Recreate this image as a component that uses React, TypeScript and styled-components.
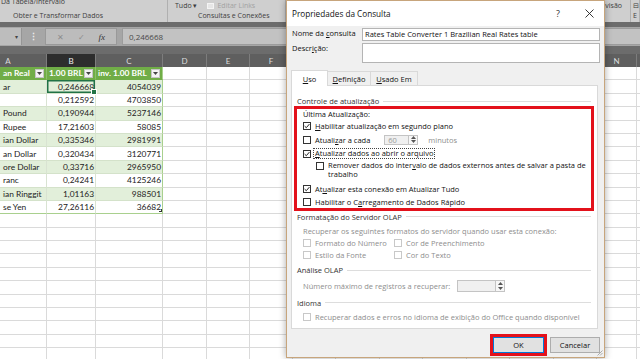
import React from 'react';
import styled, { createGlobalStyle } from 'styled-components';

const GlobalStyle = createGlobalStyle`
  html, body {
    margin: 0;
    padding: 0;
    background: #fff;
  }
  * {
    box-sizing: border-box;
  }
`;

const COLS = '77px 49px 67px 44px 43px 43px repeat(7, 43.43px) 40px 40px';
const LETTERS = 'ABCDEFGHIJKLMN '.split('');

const rows = [
    { name: 'ar', b: '0,246668', c: '4054039' },
    { name: '', b: '0,212592', c: '4703850' },
    { name: 'Pound', b: '0,190944', c: '5237146' },
    { name: 'Rupee', b: '17,21603', c: '58085' },
    { name: 'ian Dollar', b: '0,335346', c: '2981991' },
    { name: 'an Dollar', b: '0,320434', c: '3120771' },
    { name: 'ore Dollar', b: '0,33716', c: '2965950' },
    { name: 'ranc', b: '0,24241', c: '4125246' },
    { name: 'ian Ringgit', b: '1,01163', c: '988501' },
    { name: 'se Yen', b: '27,26116', c: '36682' },
];

const Check = ({ on, off }: { on?: boolean; off?: boolean }) => (
    <Box $disabled={off}>
        {on && (
            <svg width="6" height="6" viewBox="0 0 6 6">
                <path d="M0.6 3.1 L2.3 4.7 L5.4 1.1" fill="none" stroke="#222" strokeWidth="1" />
            </svg>
        )}
    </Box>
);

const Arrows = () => (
    <SpinArrows>
        <svg width="5" height="3" viewBox="0 0 5 3">
            <path d="M0 3 L2.5 0 L5 3 Z" fill="#555" />
        </svg>
        <svg width="5" height="3" viewBox="0 0 5 3">
            <path d="M0 0 L2.5 3 L5 0 Z" fill="#555" />
        </svg>
    </SpinArrows>
);

const FilterBtn = () => (
    <Filter>
        <svg width="5" height="3" viewBox="0 0 5 3">
            <path d="M0 0 L2.5 3 L5 0 Z" fill="#444" />
        </svg>
    </Filter>
);

const App = () => {
    const empty = Array.from({ length: 11 });

    return (
        <Page>
            <GlobalStyle />
            <Excel>
                <Ribbon>
                    <RibbonGroup $w={168} $pad={13}>
                        <RibbonTop>
                            <CutText>Da Tabela/Intervalo</CutText>
                        </RibbonTop>
                        <GroupLabel>Obter e Transformar Dados</GroupLabel>
                    </RibbonGroup>
                    <RibbonGroup $w={118} $pad={7}>
                        <RibbonTop>
                            <span>Tudo ▾</span>
                            <Greyed>
                                <LinkIcon />
                                Editar Links
                            </Greyed>
                        </RibbonTop>
                        <GroupLabel $indent={23}>Consultas e Conexões</GroupLabel>
                    </RibbonGroup>
                    <RibbonGroup $w={345} $pad={0} $right>
                        <RibbonTop>
                            <span>Revisão</span>
                        </RibbonTop>
                        <GroupLabel />
                    </RibbonGroup>
                    <RibbonGroup $w={9} $pad={2}>
                        <RibbonTop>
                            <span>⊟</span>
                        </RibbonTop>
                        <GroupLabel>E</GroupLabel>
                    </RibbonGroup>
                </Ribbon>
                <DarkBand $h={5} />
                <FormulaBar>
                    <NameBox>▾</NameBox>
                    <Dots>⋮</Dots>
                    <FxBox>
                        <span>✕</span>
                        <span>✓</span>
                        <Fx>fx</Fx>
                    </FxBox>
                    <FormulaInput>0,246668</FormulaInput>
                </FormulaBar>
                <DarkBand $h={8} />
                <SheetRow $h={13}>
                    {LETTERS.map((l, i) => (
                        <ColHead key={i} $sel={l === 'B'}>
                            {l.trim()}
                        </ColHead>
                    ))}
                </SheetRow>
                <SheetRow $h={13.4}>
                    <Cell $kind="head" $first>
                        an Real
                        <FilterBtn />
                    </Cell>
                    <Cell $kind="head">
                        1.00 BRL
                        <FilterBtn />
                    </Cell>
                    <Cell $kind="head" $edge>
                        inv. 1.00 BRL
                        <FilterBtn />
                    </Cell>
                    {LETTERS.slice(3).map((_, i) => (
                        <Cell key={i} $kind="blank" />
                    ))}
                </SheetRow>
                {rows.map((r, i) => {
                    const kind = i % 2 === 0 ? 'band' : 'plain';
                    const last = i === rows.length - 1;
                    return (
                        <SheetRow key={i} $h={13.4}>
                            <Cell $kind={kind} $first $last={last}>
                                {r.name}
                            </Cell>
                            <Cell $kind={kind} $right $last={last} $selected={i === 0}>
                                {r.b}
                            </Cell>
                            <Cell $kind={kind} $right $edge $last={last}>
                                {r.c}
                                {last && <ResizeMark />}
                            </Cell>
                            {LETTERS.slice(3).map((_, j) => (
                                <Cell key={j} $kind="blank" />
                            ))}
                        </SheetRow>
                    );
                })}
                {empty.map((_, i) => (
                    <SheetRow key={'e' + i} $h={13.4}>
                        {LETTERS.map((_, j) => (
                            <Cell key={j} $kind="blank" />
                        ))}
                    </SheetRow>
                ))}
            </Excel>

            <Dialog>
                <TitleBar>
                    <Title>Propriedades da Consulta</Title>
                    <Help>?</Help>
                    <Close>
                        <svg width="9" height="9" viewBox="0 0 9 9">
                            <path d="M0.5 0.5 L8.5 8.5 M8.5 0.5 L0.5 8.5" stroke="#222" strokeWidth="0.9" />
                        </svg>
                    </Close>
                </TitleBar>
                <Body>
                    <FieldRow $h={13} $top={2}>
                        <FieldLabel>
                            Nome da <Key>c</Key>onsulta
                        </FieldLabel>
                        <TextBox>Rates Table Converter 1 Brazilian Real Rates table</TextBox>
                    </FieldRow>
                    <FieldRow $h={20} $top={2}>
                        <FieldLabel>
                            Descr<Key>i</Key>ção:
                        </FieldLabel>
                        <TextBox />
                    </FieldRow>
                    <Tabs>
                        <Tab $w={37} $active>
                            <Key>U</Key>so
                        </Tab>
                        <Tab $w={43}>
                            <Key>D</Key>efinição
                        </Tab>
                        <Tab $w={47}>
                            <Key>U</Key>sado Em
                        </Tab>
                    </Tabs>
                    <Panel>
                        <GroupTitle $h={10}>Controle de atualização</GroupTitle>
                        <RedFrame>
                            <Line $h={10}>Última Atualização:</Line>
                            <Line $h={13}>
                                <Check on />
                                <span>
                                    <Key>H</Key>abilitar atualização em segundo plano
                                </span>
                            </Line>
                            <Line $h={15}>
                                <Check />
                                <span>
                                    Atuali<Key>z</Key>ar a cada
                                </span>
                                <Spinner $w={34} $h={10} $ml={10}>
                                    60
                                    <Arrows />
                                </Spinner>
                                <Muted $ml={6}>minutos</Muted>
                            </Line>
                            <Line $h={13}>
                                <Check on />
                                <Focus>
                                    <Key>A</Key>tualizar dados ao abrir o arquivo
                                </Focus>
                            </Line>
                            <Line $h={20} $indent={13} $top>
                                <Check />
                                <Wrapped>
                                    Remover dados do inter<Key>v</Key>alo de dados externos antes de salvar a pasta de
                                    <br />
                                    trabalho
                                </Wrapped>
                            </Line>
                            <Line $h={13} $mt={2}>
                                <Check on />
                                <span>
                                    At<Key>u</Key>alizar esta conexão em Atualizar Tudo
                                </span>
                            </Line>
                            <Line $h={13}>
                                <Check />
                                <span>
                                    Habilitar o C<Key>a</Key>rregamento de Dados Rápido
                                </span>
                            </Line>
                        </RedFrame>
                        <GroupTitle $h={11}>Formatação do Servidor OLAP</GroupTitle>
                        <Line $h={12} $mt={3} $inset>
                            <Muted>Recuperar os seguintes formatos do servidor quando usar esta conexão:</Muted>
                        </Line>
                        <PairRow $h={11}>
                            <Line $h={11}>
                                <Check off />
                                <Muted>Formato do Número</Muted>
                            </Line>
                            <Line $h={11}>
                                <Check off />
                                <Muted>Cor de Preenchimento</Muted>
                            </Line>
                        </PairRow>
                        <PairRow $h={13}>
                            <Line $h={13}>
                                <Check off />
                                <Muted>Estilo da Fonte</Muted>
                            </Line>
                            <Line $h={13}>
                                <Check off />
                                <Muted>Cor do Texto</Muted>
                            </Line>
                        </PairRow>
                        <GroupTitle $h={12} $mt={3}>
                            Análise OLAP
                        </GroupTitle>
                        <Line $h={14} $mt={3} $inset>
                            <Muted>Número máximo de registros a recuperar:</Muted>
                            <Spinner $w={48} $h={12} $ml={3}>
                                <Arrows />
                            </Spinner>
                        </Line>
                        <GroupTitle $h={11} $mt={4}>
                            Idioma
                        </GroupTitle>
                        <Line $h={11} $mt={3} $inset>
                            <Check off />
                            <Muted>Recuperar dados e erros no idioma de exibição do Office quando disponível</Muted>
                        </Line>
                    </Panel>
                    <ButtonRow>
                        <RedButtonFrame>
                            <DlgButton $w={51} $default>
                                OK
                            </DlgButton>
                        </RedButtonFrame>
                        <DlgButton $w={50}>Cancelar</DlgButton>
                    </ButtonRow>
                </Body>
                <Grip>
                    <svg width="6" height="6" viewBox="0 0 6 6">
                        <path d="M5.5 0.5 L0.5 5.5 M5.5 3 L3 5.5" stroke="#999" strokeWidth="0.8" />
                    </svg>
                </Grip>
            </Dialog>
        </Page>
    );
};

const Page = styled.div`
    position: relative;
    width: 640px;
    height: 359px;
    overflow: hidden;
    background: #fff;
`;

const Excel = styled.div`
    display: flex;
    flex-direction: column;
    width: 640px;
`;

const Ribbon = styled.div`
    display: flex;
    height: 22px;
    background: #cfcfcf;
    font-family: 'Open Sans', sans-serif;
    font-size: 7px;
    color: #3c3c3c;
    overflow: hidden;
`;

const RibbonGroup = styled.div<{ $w: number; $pad: number; $right?: boolean }>`
    flex: 0 0 ${(p) => p.$w}px;
    display: flex;
    flex-direction: column;
    justify-content: space-between;
    align-items: ${(p) => (p.$right ? 'flex-end' : 'flex-start')};
    padding: 0 ${(p) => (p.$right ? 8 : 0)}px 2px ${(p) => p.$pad}px;
    border-right: 1px solid #b0b0b0;
    overflow: hidden;
`;

const RibbonTop = styled.div`
    display: flex;
    align-items: center;
    gap: 10px;
    height: 11px;
`;

const CutText = styled.span`
    margin-top: -9px;
    margin-left: -12px;
`;

const Greyed = styled.span`
    display: flex;
    align-items: center;
    gap: 3px;
    color: #a2a2a2;
`;

const LinkIcon = styled.span`
    width: 7px;
    height: 6px;
    border: 1px solid #f4f4f4;
    background: #e6e6e6;
`;

const GroupLabel = styled.div<{ $indent?: number }>`
    height: 9px;
    line-height: 9px;
    padding-left: ${(p) => p.$indent || 0}px;
    color: #404040;
`;

const DarkBand = styled.div<{ $h: number }>`
    height: ${(p) => p.$h}px;
    background: #6c6c6c;
`;

const FormulaBar = styled.div`
    display: flex;
    align-items: center;
    height: 19px;
    background: #a6a6a6;
    font-family: 'Open Sans', sans-serif;
    font-size: 8px;
    color: #555;
`;

const NameBox = styled.div`
    width: 22px;
    height: 17px;
    background: #bdbdbd;
    border-right: 1px solid #959595;
    display: flex;
    align-items: center;
    justify-content: flex-end;
    padding-right: 3px;
    font-size: 6px;
    color: #444;
`;

const Dots = styled.div`
    width: 23px;
    text-align: center;
    color: #eee;
    font-size: 9px;
    font-weight: bold;
`;

const FxBox = styled.div`
    width: 72px;
    height: 17px;
    background: #bcbcbc;
    border: 1px solid #999;
    display: flex;
    align-items: center;
    justify-content: space-around;
    padding: 0 4px;
    color: #8c8c8c;
    font-size: 8px;
`;

const Fx = styled.span`
    font-family: 'Liberation Serif', serif;
    font-style: italic;
    color: #333;
    font-size: 9px;
`;

const FormulaInput = styled.div`
    flex: 1;
    height: 17px;
    margin-left: 5px;
    background: #c2c2c2;
    border: 1px solid #9c9c9c;
    border-right: none;
    padding-left: 6px;
    line-height: 15px;
    font-size: 8px;
    color: #4a4a4a;
`;

const SheetRow = styled.div<{ $h: number }>`
    display: grid;
    grid-template-columns: ${COLS};
    height: ${(p) => p.$h}px;
    margin-left: -30px;
`;

const ColHead = styled.div<{ $sel?: boolean }>`
    display: flex;
    align-items: center;
    justify-content: center;
    background: ${(p) => (p.$sel ? '#2d2d2d' : '#5f5f5f')};
    color: ${(p) => (p.$sel ? '#f0f0f0' : '#dcdcdc')};
    border-right: 1px solid #7d7d7d;
    font-family: 'Lato', sans-serif;
    font-size: 8px;
`;

type Kind = 'head' | 'band' | 'plain' | 'blank';

const cellBg: Record<Kind, string> = {
    head: '#70ad47',
    band: '#e2efda',
    plain: '#ffffff',
    blank: '#ffffff',
};

const Cell = styled.div<{
    $kind: Kind;
    $right?: boolean;
    $first?: boolean;
    $edge?: boolean;
    $last?: boolean;
    $selected?: boolean;
}>`
    position: relative;
    display: flex;
    align-items: center;
    justify-content: ${(p) => (p.$kind === 'head' ? 'space-between' : p.$right ? 'flex-end' : 'flex-start')};
    padding: 0 ${(p) => (p.$kind === 'head' ? 2 : 1)}px 0 ${(p) => (p.$first ? 33 : 2)}px;
    background: ${(p) => cellBg[p.$kind]};
    color: ${(p) => (p.$kind === 'head' ? '#fff' : '#222')};
    font-weight: ${(p) => (p.$kind === 'head' ? 700 : 400)};
    font-family: 'Lato', sans-serif;
    font-size: 8.4px;
    white-space: nowrap;
    overflow: visible;
    border-right: 1px solid
        ${(p) => (p.$edge ? '#a9d08e' : p.$kind === 'head' ? '#8cc06a' : p.$kind === 'blank' ? '#dadada' : '#d9e3d2')};
    border-bottom: 1px solid
        ${(p) => (p.$last ? '#a9d08e' : p.$kind === 'blank' ? '#dadada' : p.$kind === 'head' ? '#70ad47' : '#d4e2ca')};
    ${(p) =>
        p.$selected &&
        `
        box-shadow: inset 0 0 0 1.5px #217346;
        &::after {
            content: '';
            position: absolute;
            right: -2px;
            bottom: -2px;
            width: 4px;
            height: 4px;
            background: #217346;
            border: 1px solid #fff;
            z-index: 2;
        }
    `}
`;

const Filter = styled.span`
    width: 9px;
    height: 9px;
    background: #f3f3f3;
    border: 1px solid #c4c4c4;
    display: flex;
    align-items: center;
    justify-content: center;
`;

const ResizeMark = styled.span`
    position: absolute;
    right: 0;
    bottom: 1px;
    width: 3px;
    height: 3px;
    border-right: 1px solid #333;
    border-bottom: 1px solid #333;
`;

const Dialog = styled.div`
    position: absolute;
    left: 286px;
    top: 0;
    width: 319px;
    height: 358px;
    border: 1px solid #c7a57c;
    background: #f0f0f0;
    box-shadow: 0 0 7px rgba(0, 0, 0, 0.35);
    display: flex;
    flex-direction: column;
    font-family: 'Open Sans', sans-serif;
    font-size: 7.5px;
    color: #111;
`;

const TitleBar = styled.div`
    height: 25px;
    background: #fff;
    display: flex;
    align-items: center;
    padding-left: 5px;
`;

const Title = styled.span`
    flex: 1;
    font-size: 8.2px;
`;

const Help = styled.span`
    width: 32px;
    font-size: 9px;
    text-align: center;
    color: #333;
`;

const Close = styled.span`
    width: 30px;
    display: flex;
    justify-content: center;
`;

const Body = styled.div`
    display: flex;
    flex-direction: column;
    padding: 0 4px 0 5px;
`;

const FieldRow = styled.div<{ $h: number; $top: number }>`
    display: flex;
    height: ${(p) => p.$h}px;
    margin-top: ${(p) => p.$top}px;
`;

const FieldLabel = styled.div`
    width: 70px;
    line-height: 11px;
`;

const TextBox = styled.div`
    width: 238px;
    background: #fff;
    border: 1px solid #b4b4b4;
    padding-left: 2px;
    line-height: 11px;
`;

const Key = styled.span`
    text-decoration: underline;
`;

const Tabs = styled.div`
    display: flex;
    align-items: flex-end;
    height: 15px;
    margin: 7px 0 0 -1px;
`;

const Tab = styled.div<{ $w: number; $active?: boolean }>`
    width: ${(p) => p.$w}px;
    height: ${(p) => (p.$active ? 16 : 14)}px;
    margin-bottom: ${(p) => (p.$active ? -1 : 0)}px;
    background: ${(p) => (p.$active ? '#fff' : '#f0f0f0')};
    border: 1px solid #d9d9d9;
    border-bottom: none;
    border-left-width: ${(p) => (p.$active ? 1 : 0)}px;
    display: flex;
    align-items: center;
    justify-content: center;
    position: relative;
    z-index: 1;
`;

const Panel = styled.div`
    width: 307px;
    height: 244px;
    margin-left: -1px;
    background: #fff;
    border: 1px solid #d9d9d9;
    padding: 10px 0 0 0;
    display: flex;
    flex-direction: column;
`;

const GroupTitle = styled.div<{ $h: number; $mt?: number }>`
    height: ${(p) => p.$h}px;
    margin-top: ${(p) => p.$mt || 0}px;
    padding: 0 6px 0 5px;
    display: flex;
    align-items: center;
    gap: 4px;
    color: #333;
    &::after {
        content: '';
        flex: 1;
        border-top: 1px solid #dddddd;
    }
`;

const RedFrame = styled.div`
    margin: 0 3px 0 2px;
    border: 3px solid #e3111b;
    padding-left: 6px;
    display: flex;
    flex-direction: column;
`;

const Line = styled.div<{ $h: number; $mt?: number; $indent?: number; $top?: boolean; $inset?: boolean }>`
    height: ${(p) => p.$h}px;
    margin-top: ${(p) => p.$mt || 0}px;
    padding-left: ${(p) => (p.$indent || 0) + (p.$inset ? 11 : 0)}px;
    padding-top: ${(p) => (p.$top ? 2 : 0)}px;
    display: flex;
    align-items: ${(p) => (p.$top ? 'flex-start' : 'center')};
    gap: 4px;
    white-space: nowrap;
`;

const PairRow = styled.div<{ $h: number }>`
    display: grid;
    grid-template-columns: 91px auto;
    height: ${(p) => p.$h}px;
    padding-left: 11px;
`;

const Box = styled.span<{ $disabled?: boolean }>`
    flex: 0 0 8px;
    width: 8px;
    height: 8px;
    background: #fff;
    border: 1px solid ${(p) => (p.$disabled ? '#c8c8c8' : '#333')};
    display: flex;
    align-items: center;
    justify-content: center;
`;

const Wrapped = styled.span`
    line-height: 9px;
    margin-top: -1px;
`;

const Focus = styled.span`
    border: 1px dotted #444;
    padding: 0 1px;
    margin-left: -2px;
    line-height: 9px;
`;

const Muted = styled.span<{ $ml?: number }>`
    color: #8e8e8e;
    margin-left: ${(p) => p.$ml || 0}px;
`;

const Spinner = styled.span<{ $w: number; $h: number; $ml: number }>`
    width: ${(p) => p.$w}px;
    height: ${(p) => p.$h}px;
    margin-left: ${(p) => p.$ml}px;
    background: #f0f0f0;
    border: 1px solid #c4c4c4;
    color: #9a9a9a;
    display: flex;
    align-items: center;
    padding-left: 3px;
    position: relative;
    line-height: 8px;
`;

const SpinArrows = styled.span`
    margin-left: auto;
    width: 9px;
    height: 100%;
    border-left: 1px solid #c4c4c4;
    background: #f7f7f7;
    display: flex;
    flex-direction: column;
    align-items: center;
    justify-content: space-around;
`;

const ButtonRow = styled.div`
    display: flex;
    justify-content: flex-end;
    align-items: center;
    gap: 3px;
    margin-top: 5px;
`;

const RedButtonFrame = styled.div`
    border: 3px solid #e3111b;
    display: flex;
`;

const DlgButton = styled.div<{ $w: number; $default?: boolean }>`
    width: ${(p) => p.$w}px;
    height: 16px;
    background: #e1e1e1;
    border: 1px solid ${(p) => (p.$default ? '#0078d7' : '#adadad')};
    display: flex;
    align-items: center;
    justify-content: center;
    color: #111;
`;

const Grip = styled.div`
    position: absolute;
    right: 1px;
    bottom: 1px;
    display: flex;
`;

export default App;
